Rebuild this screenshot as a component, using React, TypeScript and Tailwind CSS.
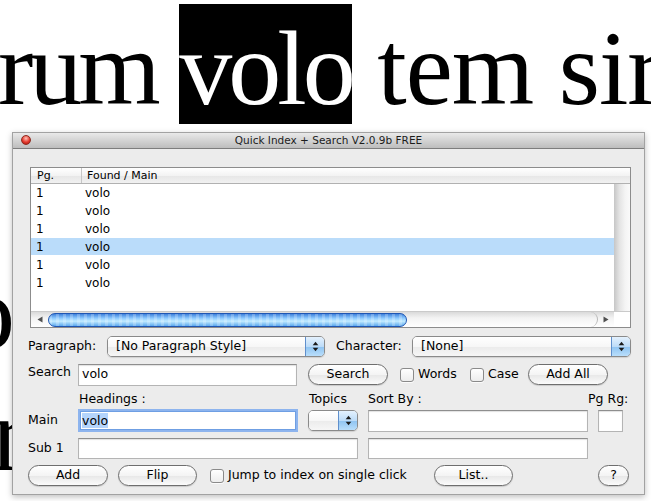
import React from "react";

type Cls = { className?: string; children?: React.ReactNode };

const UpDown = () => (
  <svg width="7" height="11" viewBox="0 0 7 11">
    <path d="M3.5 0.8 L6.3 4.2 L0.7 4.2 Z" fill="#1a1a1a" />
    <path d="M3.5 10.2 L6.3 6.8 L0.7 6.8 Z" fill="#1a1a1a" />
  </svg>
);

const Popup = ({ label, className = "" }: { label?: string; className?: string }) => (
  <div
    className={`flex h-[21px] overflow-hidden rounded-[5px] border border-[#8a8a8a] shadow-[0_1px_1px_rgba(0,0,0,0.12)] ${className}`}
  >
    <div className="flex flex-1 items-center overflow-hidden whitespace-nowrap bg-[linear-gradient(to_bottom,#ffffff,#f7f7f7_50%,#ebebeb_51%,#f6f6f6)] pl-[8px] text-[12.5px] text-black">
      {label}
    </div>
    <div className="flex w-[19px] items-center justify-center border-l border-[#5f8fcc] bg-[linear-gradient(to_bottom,#e4f1fd,#bddcf8_50%,#8ec3f1_51%,#b9defb)]">
      <UpDown />
    </div>
  </div>
);

const Button = ({ className = "", children }: Cls) => (
  <button
    className={`h-[21px] rounded-full border border-[#6e6e6e] bg-[linear-gradient(to_bottom,#ffffff,#f4f4f4_50%,#e7e7e7_51%,#fbfbfb)] text-[12.5px] leading-none text-black shadow-[0_1px_1px_rgba(0,0,0,0.15)] ${className}`}
  >
    {children}
  </button>
);

const Check = () => (
  <div className="h-[14px] w-[14px] shrink-0 rounded-[3px] border border-[#8a8a8a] bg-[linear-gradient(to_bottom,#ffffff,#ededed)] shadow-[0_1px_0_rgba(255,255,255,0.8)]" />
);

const Field = ({ className = "", children }: Cls) => (
  <div
    className={`flex items-center border border-[#b4b4b4] border-t-[#8e8e8e] bg-white pl-[3px] text-[12.5px] text-black shadow-[inset_0_1px_1px_rgba(0,0,0,0.12)] ${className}`}
  >
    {children}
  </div>
);

const Tri = ({ dir }: { dir: "l" | "r" }) => (
  <svg width="6" height="7" viewBox="0 0 6 7">
    <path d={dir === "l" ? "M0.5 3.5 L5.5 0.5 L5.5 6.5 Z" : "M5.5 3.5 L0.5 0.5 L0.5 6.5 Z"} fill="#505050" />
  </svg>
);

const rows = [
  { pg: "1", main: "volo" },
  { pg: "1", main: "volo" },
  { pg: "1", main: "volo" },
  { pg: "1", main: "volo" },
  { pg: "1", main: "volo" },
  { pg: "1", main: "volo" },
];

const ResultsTable = () => (
  <div className="ml-[2px] mt-[18px] flex h-[161px] w-[601px] flex-col border border-[#8c8c8c] bg-white">
    <div className="flex h-[16px] border-b border-[#b1b1b1] bg-[linear-gradient(to_bottom,#ffffff,#f3f3f3_50%,#e6e6e6_51%,#f1f1f1)] text-[11px] leading-[15px] text-black">
      <div className="w-[51px] border-r border-[#c6c6c6] pl-[6px]">Pg.</div>
      <div className="pl-[5px]">Found / Main</div>
    </div>
    <div className="flex flex-1">
      <div className="flex-1">
        {rows.map((r, i) => (
          <div
            key={i}
            className={`flex h-[18px] items-center border-b border-white text-[12px] text-black ${
              i === 3 ? "bg-[#badcfa]" : ""
            }`}
          >
            <div className="w-[51px] pl-[5px]">{r.pg}</div>
            <div className="pl-[3px]">{r.main}</div>
          </div>
        ))}
      </div>
      <div className="w-[16px] bg-[linear-gradient(to_right,#c6c6c6,#e4e4e4_35%,#f4f4f4_70%,#fafafa)]" />
    </div>
    <div className="flex h-[16px] border-t border-[#cacaca] bg-[linear-gradient(to_bottom,#dadada,#f3f3f3_40%,#ffffff)]">
      <div className="flex w-[16px] items-center justify-center pl-[2px]">
        <Tri dir="l" />
      </div>
      <div className="flex flex-1 items-center rounded-r-full border-r border-[#b9b9b9] pl-[1px]">
        <div className="h-[14px] w-[359px] rounded-full border border-[#1f56b3] bg-[repeating-linear-gradient(90deg,rgba(255,255,255,0.22)_0_3px,rgba(255,255,255,0)_3px_7px),linear-gradient(to_bottom,#3f82dc,#8dcaff_35%,#c2ebff_60%,#5ca9ee)]" />
      </div>
      <div className="flex w-[16px] items-center justify-center">
        <Tri dir="r" />
      </div>
      <div className="w-[16px] bg-white" />
    </div>
  </div>
);

const QuickIndexWindow = () => (
  <div className="absolute left-[12px] top-[132px] h-[363px] w-[633px] border border-[#a2a2a2] bg-[#ececec] font-['DejaVu_Sans',sans-serif] text-[12.5px] text-black shadow-[0_2px_6px_rgba(0,0,0,0.25)]">
    <div className="relative flex h-[16px] items-center justify-center border-b border-[#7d7d7d] bg-[linear-gradient(to_bottom,#e9e9e9,#d3d3d3_50%,#bdbdbd)] text-[10.5px] text-[#1c1c1c]">
      <div className="absolute left-[8px] top-[2px] h-[10px] w-[10px] rounded-full border border-[#8e2a1f] bg-[radial-gradient(circle_at_50%_30%,#ffc2b8,#e5392d_55%,#a0160e)]" />
      Quick Index + Search V2.0.9b FREE
    </div>

    <div className="pl-[15px]">
      <ResultsTable />

      <div className="mt-[7px] flex h-[22px] items-center">
        <div className="w-[79px]">Paragraph:</div>
        <Popup className="w-[218px]" label="[No Paragraph Style]" />
        <div className="ml-[11px] w-[76px]">Character:</div>
        <Popup className="w-[219px]" label="[None]" />
      </div>

      <div className="mt-[6px] flex h-[23px] items-center">
        <div className="w-[50px] self-start">Search</div>
        <Field className="h-[22px] w-[219px]">volo</Field>
        <Button className="ml-[11px] w-[80px]">Search</Button>
        <div className="ml-[12px] flex w-[70px] items-center">
          <Check />
          <span className="ml-[4px]">Words</span>
        </div>
        <div className="flex w-[58px] items-center">
          <Check />
          <span className="ml-[4px]">Case</span>
        </div>
        <Button className="w-[80px]">Add All</Button>
      </div>

      <div className="mt-[3px] flex h-[20px] items-center">
        <div className="w-[51px]" />
        <div className="w-[230px]">Headings :</div>
        <div className="w-[59px]">Topics</div>
        <div className="w-[220px]">Sort By :</div>
        <div>Pg Rg:</div>
      </div>

      <div className="flex h-[23px] items-center">
        <div className="w-[50px]">Main</div>
        <div className="flex h-[23px] w-[220px] items-center border-2 border-[#8db4ee] bg-white pl-[2px] shadow-[inset_0_0_0_1px_#6f9fe3]">
          <span className="bg-[#b4d4fc] leading-[15px]">volo</span>
        </div>
        <Popup className="ml-[10px] w-[50px]" />
        <Field className="ml-[10px] h-[22px] w-[220px]" />
        <Field className="ml-[10px] h-[22px] w-[25px]" />
      </div>

      <div className="mt-[6px] flex h-[21px] items-center">
        <div className="w-[50px]">Sub 1</div>
        <Field className="h-[21px] w-[280px]" />
        <Field className="ml-[10px] h-[21px] w-[220px]" />
      </div>

      <div className="mt-[6px] flex h-[21px] items-center">
        <Button className="w-[80px]">Add</Button>
        <Button className="ml-[10px] w-[79px]">Flip</Button>
        <div className="ml-[13px] flex w-[224px] items-center">
          <Check />
          <span className="ml-[4px] whitespace-nowrap">Jump to index on single click</span>
        </div>
        <Button className="w-[79px]">List..</Button>
        <Button className="ml-[85px] w-[31px]">?</Button>
      </div>
    </div>
  </div>
);

export default function App() {
  return (
    <div className="relative h-[501px] w-[651px] overflow-hidden bg-white">
      <div className="-ml-[2px] whitespace-nowrap pt-[4px] font-['Liberation_Serif',serif] text-[106px] leading-[122px] tracking-[-4px] text-black">
        <div>
          rum{" "}
          <span className="inline-block h-[120px] bg-black pt-[10px] leading-[110px] text-white">volo</span>
          <span className="tracking-[-1px]"> tem sir</span>
        </div>
        <div>&nbsp;</div>
        <div className="-ml-[36px]">or</div>
        <div className="-ml-[6px]">r</div>
      </div>
      <QuickIndexWindow />
    </div>
  );
}
